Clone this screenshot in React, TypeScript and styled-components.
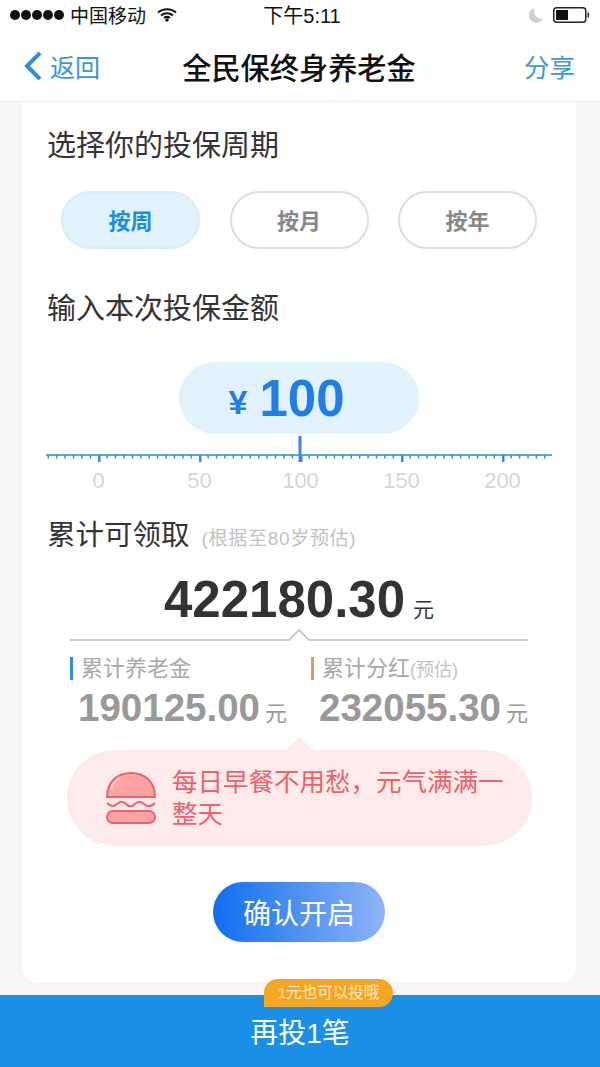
import React from 'react';
import styled, { createGlobalStyle } from 'styled-components';

const Global = createGlobalStyle`
  html, body { margin: 0; padding: 0; background: #f6f6f6; }
  body { font-family: "Liberation Sans", "Noto Sans CJK SC", sans-serif; }
`;

const Page = styled.div`
  width: 600px;
  height: 1067px;
  overflow: hidden;
  display: flex;
  flex-direction: column;
  background: #f6f6f6;
`;

const Header = styled.header`
  height: 102px;
  flex: none;
  background: #fff;
  border-bottom: 1px solid #ececec;
  box-sizing: border-box;
`;

const StatusBar = styled.div`
  height: 32px;
  box-sizing: border-box;
  display: grid;
  grid-template-columns: 1fr auto 1fr;
  align-items: center;
  padding: 0 10px 3px 10px;
  font-size: 19px;
  color: #111;
`;

const StatusLeft = styled.div`
  display: flex;
  align-items: center;
  gap: 6px;
`;

const Dots = styled.div`
  display: flex;
  gap: 1px;
`;

const Dot = styled.i`
  width: 10px;
  height: 10px;
  border-radius: 50%;
  background: #111;
`;

const Clock = styled.span`
  font-size: 20px;
  padding-left: 4px;
`;

const StatusRight = styled.div`
  display: flex;
  justify-content: flex-end;
  align-items: center;
  gap: 9px;
`;

const NavBar = styled.nav`
  height: 69px;
  box-sizing: border-box;
  display: grid;
  grid-template-columns: 1fr auto 1fr;
  align-items: center;
  padding: 0 25px 2px 23px;
`;

const Back = styled.div`
  display: flex;
  align-items: center;
  gap: 7px;
  color: #3d97d3;
  font-size: 25px;
`;

const Title = styled.h1`
  margin: 0;
  font-size: 29.2px;
  font-weight: 500;
  color: #111;
`;

const Share = styled.div`
  text-align: right;
  color: #3d97d3;
  font-size: 25.5px;
`;

const Card = styled.main`
  flex: 1;
  margin: 0 24px 13px 22px;
  padding: 0 25px;
  background: #fff;
  border-radius: 0 0 14px 14px;
  display: flex;
  flex-direction: column;
`;

const SectionTitle = styled.h2<{ $top: number }>`
  margin: ${p => p.$top}px 0 0;
  font-size: 29px;
  line-height: 40px;
  font-weight: 400;
  color: #333;
`;

const Periods = styled.div`
  display: flex;
  gap: 29.5px;
  margin: 25px 0 0 14px;
`;

const Period = styled.div<{ $active?: boolean }>`
  width: 139px;
  height: 58px;
  box-sizing: border-box;
  border-radius: 29px;
  display: flex;
  align-items: center;
  justify-content: center;
  font-size: 22px;
  font-weight: 700;
  padding-bottom: 2px;
  color: ${p => (p.$active ? '#1a8fe0' : '#888')};
  background: ${p => (p.$active ? '#e1f2fd' : '#fff')};
  border: 2px solid ${p => (p.$active ? '#d8ecf9' : '#dedede')};
`;

const AmountWrap = styled.div`
  display: flex;
  justify-content: center;
  margin: 33px 0 0 -1px;
`;

const Amount = styled.div`
  width: 240px;
  height: 72px;
  box-sizing: border-box;
  padding-right: 24px;
  border-radius: 36px;
  background: #e1f2fd;
  color: #1f7fe8;
  display: flex;
  align-items: center;
  justify-content: center;
  gap: 12px;
`;

const Yen = styled.span`
  font-size: 34px;
  font-weight: 700;
  margin-top: 8px;
`;

const AmountValue = styled.span`
  font-size: 51px;
  font-weight: 700;
`;

const Scale = styled.div`
  margin: 2px 0 0 -1px;
  width: 506px;
`;

const ScaleLabels = styled.div`
  display: flex;
  margin: 6px 0 0 2px;
  font-size: 22px;
  line-height: 26px;
  color: #d6d6d6;
`;

const ScaleLabel = styled.span`
  width: 101px;
  flex: none;
  text-align: center;
`;

const TotalHead = styled.div`
  display: flex;
  align-items: baseline;
  gap: 12px;
  margin-top: 21px;
  line-height: 40px;
`;

const TotalTitle = styled.span`
  font-size: 28.5px;
  color: #333;
`;

const TotalHint = styled.span`
  font-size: 19px;
  letter-spacing: 0.7px;
  color: #c2c2c2;
`;

const TotalValue = styled.div`
  display: flex;
  justify-content: center;
  align-items: baseline;
  gap: 8px;
  margin-top: 24px;
  line-height: 34px;
  color: #333;
`;

const BigNumber = styled.span`
  font-size: 51px;
  font-weight: 700;
`;

const Unit = styled.span<{ $muted?: boolean }>`
  font-size: ${p => (p.$muted ? 22 : 21)}px;
  color: ${p => (p.$muted ? '#999' : '#333')};
`;

const DividerRow = styled.div`
  margin: 2px 0 0 23px;
  width: 458px;
  height: 12px;
  line-height: 0;
`;

const Split = styled.div`
  display: grid;
  grid-template-columns: 241px 1fr;
  margin: 12px 0 0 23px;
`;

const SplitLabel = styled.div<{ $accent: string }>`
  border-left: 3px solid ${p => p.$accent};
  padding-left: 8px;
  height: 23px;
  margin-top: 4px;
  font-size: 22px;
  line-height: 23px;
  color: #a8a8a8;
  white-space: nowrap;
`;

const LabelNote = styled.span`
  font-size: 18px;
  color: #c4c4c4;
`;

const SplitValue = styled.div`
  margin: 5px 0 0 8px;
  display: flex;
  align-items: baseline;
  gap: 5px;
  line-height: 46px;
  color: #999;
  white-space: nowrap;
`;

const MidNumber = styled.span`
  font-size: 38.5px;
  font-weight: 700;
`;

const Bubble = styled.div`
  position: relative;
  margin: 13px 0 0 20px;
  width: 465px;
  height: 96px;
  box-sizing: border-box;
  padding-left: 38px;
  border-radius: 48px;
  background: #fdeaea;
  display: flex;
  align-items: center;
  gap: 15px;
  &::before {
    content: '';
    position: absolute;
    left: 219px;
    top: -13px;
    border-left: 13px solid transparent;
    border-right: 13px solid transparent;
    border-bottom: 13px solid #fdeaea;
  }
`;

const BubbleText = styled.div`
  width: 340px;
  font-size: 25.5px;
  line-height: 32px;
  color: #e8636b;
`;

const ConfirmRow = styled.div`
  display: flex;
  justify-content: center;
  margin-top: 36px;
`;

const Confirm = styled.button`
  width: 172px;
  height: 60px;
  border: 0;
  padding: 0;
  border-radius: 30px;
  background: linear-gradient(90deg, #0f6ff0, #8fb4f4);
  color: #fff;
  font: inherit;
  font-size: 28px;
`;

const Footer = styled.footer`
  position: relative;
  height: 72px;
  flex: none;
  background: #1a8fe6;
  color: #fff;
  font-size: 28px;
  display: flex;
  align-items: center;
  justify-content: center;
`;

const Tag = styled.div`
  position: absolute;
  left: 264px;
  top: -16px;
  width: 129px;
  height: 28px;
  border-radius: 14px 14px 14px 0;
  background: #f5a623;
  color: #fde9c8;
  font-size: 15.5px;
  line-height: 28px;
  text-align: center;
`;

// ruler: major tick every 101px, 12 divisions between majors
const Ruler = () => {
  const ticks = [];
  for (let i = -6; i <= 54; i++) {
    const x = 52 + (i * 101) / 12;
    if (x < 1 || x > 505) continue;
    const major = (i + 60) % 12 === 0;
    ticks.push(<rect key={i} x={x} y={19} width={major ? 2.5 : 1.5} height={major ? 7 : 3.5} fill="#3f88d8" />);
  }
  return (
    <svg width="506" height="26" viewBox="0 0 506 26" style={{ display: 'block' }}>
      <rect x="0" y="18" width="506" height="2" fill="#58a8e8" />
      {ticks}
      <rect x="252.5" y="0" width="3" height="26" fill="#3f88d8" />
    </svg>
  );
};

const Burger = () => (
  <svg width="52" height="54" viewBox="0 0 52 54">
    <path d="M2 26C2 10 13 2 26 2s24 8 24 24z" fill="#fca3a3" stroke="#e8636b" strokeWidth="2" />
    <path d="M14 7c-4 3-7 7-8 12" fill="none" stroke="#fdd0d0" strokeWidth="2" />
    <path d="M2 32c4 4 7 4 10 1s6-3 9 0 6 3 9 0 6-3 9 0 7 3 11-1" fill="none" stroke="#e8636b" strokeWidth="2" />
    <rect x="2" y="40" width="48" height="12" rx="6" fill="#fca3a3" stroke="#e8636b" strokeWidth="2" />
  </svg>
);

export default function App() {
  return (
    <Page>
      <Global />
      <Header>
        <StatusBar>
          <StatusLeft>
            <Dots>{[0, 1, 2, 3, 4].map(i => <Dot key={i} />)}</Dots>
            <span>中国移动</span>
            <svg width="20" height="15" viewBox="0 0 20 15" style={{ marginLeft: 5 }}>
              <path d="M1 5.5C6 1 14 1 19 5.5M4 8.5c3.500-3 8.500-3 12 0M7 11c2-1.500 4-1.500 6 0" fill="none" stroke="#111" strokeWidth="2" />
              <circle cx="10" cy="13" r="1.700" fill="#111" />
            </svg>
          </StatusLeft>
          <Clock>下午5:11</Clock>
          <StatusRight>
            <svg width="15" height="16" viewBox="0 0 14 15">
              <path d="M5 1a7 7 0 1 0 8 10A7.500 7.500 0 0 1 5 1z" fill="#cfcfcf" />
            </svg>
            <svg width="37" height="16" viewBox="0 0 37 16">
              <rect x="0.750" y="0.750" width="32" height="14.500" rx="3" fill="#fff" stroke="#222" strokeWidth="1.500" />
              <rect x="3" y="3" width="12" height="10" fill="#111" />
              <rect x="34.500" y="5.500" width="1.500" height="5" fill="#222" />
            </svg>
          </StatusRight>
        </StatusBar>
        <NavBar>
          <Back>
            <svg width="20" height="30" viewBox="0 0 20 30">
              <path d="M17 2L4 15l13 13" fill="none" stroke="#2c8fd8" strokeWidth="4" />
            </svg>
            <span>返回</span>
          </Back>
          <Title>全民保终身养老金</Title>
          <Share>分享</Share>
        </NavBar>
      </Header>
      <Card>
        <SectionTitle $top={24}>选择你的投保周期</SectionTitle>
        <Periods>
          <Period $active>按周</Period>
          <Period>按月</Period>
          <Period>按年</Period>
        </Periods>
        <SectionTitle $top={40}>输入本次投保金额</SectionTitle>
        <AmountWrap>
          <Amount>
            <Yen>¥</Yen>
            <AmountValue>100</AmountValue>
          </Amount>
        </AmountWrap>
        <Scale>
          <Ruler />
          <ScaleLabels>
            {[0, 50, 100, 150, 200].map(n => <ScaleLabel key={n}>{n}</ScaleLabel>)}
          </ScaleLabels>
        </Scale>
        <TotalHead>
          <TotalTitle>累计可领取</TotalTitle>
          <TotalHint>(根据至80岁预估)</TotalHint>
        </TotalHead>
        <TotalValue>
          <BigNumber>422180.30</BigNumber>
          <Unit>元</Unit>
        </TotalValue>
        <DividerRow>
          <svg width="458" height="12" viewBox="0 0 458 12">
            <path d="M0 11h219l10-10 10 10h219" fill="none" stroke="#bdbdbd" strokeWidth="1.500" />
          </svg>
        </DividerRow>
        <Split>
          <div>
            <SplitLabel $accent="#2c8fd8">累计养老金</SplitLabel>
            <SplitValue>
              <MidNumber>190125.00</MidNumber>
              <Unit $muted>元</Unit>
            </SplitValue>
          </div>
          <div>
            <SplitLabel $accent="#f0905a">累计分红<LabelNote>(预估)</LabelNote></SplitLabel>
            <SplitValue>
              <MidNumber>232055.30</MidNumber>
              <Unit $muted>元</Unit>
            </SplitValue>
          </div>
        </Split>
        <Bubble>
          <Burger />
          <BubbleText>{'每日早餐不用愁\uFF0C元气满满一整天'}</BubbleText>
        </Bubble>
        <ConfirmRow>
          <Confirm>确认开启</Confirm>
        </ConfirmRow>
      </Card>
      <Footer>
        <Tag>1元也可以投哦</Tag>
        再投1笔
      </Footer>
    </Page>
  );
}
